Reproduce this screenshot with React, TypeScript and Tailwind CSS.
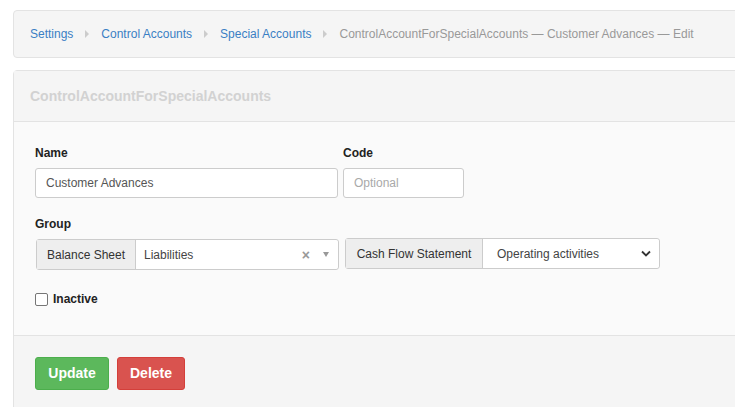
import React from "react";

const Sep = () => (
  <span className="mx-[12px] inline-block h-0 w-0 border-y-[4px] border-l-[4px] border-y-transparent border-l-[#cccccc]" />
);

const App = () => {
  return (
    <div className="min-h-[407px] w-[735px] overflow-hidden bg-white font-['Liberation_Sans',Arial,sans-serif] text-[12px] text-[#333]">
      <div className="pl-[13px] pt-[10px]">
        {/* Breadcrumb */}
        <div className="mr-[-20px] flex h-[48px] items-center rounded-[4px] border border-[#e3e3e3] bg-[#f5f5f5] pl-[16px]">
          <a className="text-[#3a7fc4]">Settings</a>
          <Sep />
          <a className="text-[#3a7fc4]">Control Accounts</a>
          <Sep />
          <a className="text-[#3a7fc4]">Special Accounts</a>
          <Sep />
          <span className="text-[#999]">ControlAccountForSpecialAccounts — Customer Advances — Edit</span>
        </div>

        {/* Panel */}
        <div className="mr-[-20px] mt-[12px] rounded-t-[4px] border border-[#e3e3e3]">
          <div className="flex h-[51px] items-center border-b border-[#e3e3e3] bg-[#f5f5f5] pl-[16px]">
            <span className="text-[14px] font-bold text-[#d2d2d2]">ControlAccountForSpecialAccounts</span>
          </div>

          <div className="h-[214px] border-b border-[#e3e3e3] bg-[#fafafa] pl-[21px] pt-[23px]">
            <div className="flex gap-[5px]">
              <div className="w-[303px]">
                <div className="mb-[6px] text-[12px] font-bold leading-[17px] text-[#222]">Name</div>
                <input
                  className="h-[30px] w-full rounded-[3px] border border-[#cccccc] bg-white px-[10px] text-[12px] text-[#555] outline-none"
                  defaultValue="Customer Advances"
                />
              </div>
              <div className="w-[121px]">
                <div className="mb-[6px] text-[12px] font-bold leading-[17px] text-[#222]">Code</div>
                <input
                  className="h-[30px] w-full rounded-[3px] border border-[#cccccc] bg-white px-[10px] text-[12px] text-[#555] outline-none placeholder:text-[#a9a9a9]"
                  placeholder="Optional"
                />
              </div>
            </div>

            <div className="mt-[18px] mb-[6px] text-[12px] font-bold leading-[17px] text-[#222]">Group</div>
            <div className="flex items-start gap-[6px]">
              <div className="ml-[1px] flex h-[31px] w-[303px] rounded-[3px] border border-[#cccccc]">
                <div className="flex w-[99px] items-center justify-center border-r border-[#cccccc] bg-[#eeeeee] text-[#333]">
                  Balance Sheet
                </div>
                <div className="flex flex-1 items-center rounded-r-[3px] bg-white pl-[8px] pr-[9px] text-[#444]">
                  <span className="flex-1">Liabilities</span>
                  <span className="mr-[13px] text-[14px] font-bold leading-none text-[#999]">×</span>
                  <span className="h-0 w-0 border-x-[3.5px] border-t-[5px] border-x-transparent border-t-[#999]" />
                </div>
              </div>
              <div className="-mt-[1px] flex h-[31px] w-[315px] rounded-[3px] border border-[#cccccc]">
                <div className="flex w-[137px] items-center justify-center border-r border-[#cccccc] bg-[#eeeeee] text-[#333]">
                  Cash Flow Statement
                </div>
                <div className="flex flex-1 items-center rounded-r-[3px] bg-white pl-[14px] pr-[8px] text-[#444]">
                  <span className="flex-1">Operating activities</span>
                  <svg width="10" height="7" viewBox="0 0 10 7">
                    <path d="M1 1.5 L5 5.5 L9 1.5" fill="none" stroke="#333" strokeWidth="1.8" />
                  </svg>
                </div>
              </div>
            </div>

            <label className="mt-[20px] flex items-center gap-[5px]">
              <span className="h-[13px] w-[13px] rounded-[2px] border border-[#767676] bg-white" />
              <span className="font-bold text-[#222]">Inactive</span>
            </label>
          </div>

          <div className="h-[80px] bg-[#f5f5f5] pl-[21px] pt-[21px]">
            <div className="flex gap-[8px]">
              <button className="h-[33px] w-[74px] rounded-[3px] border border-[#4cae4c] bg-[#5cb85c] text-[14px] font-bold text-white">
                Update
              </button>
              <button className="h-[33px] w-[68px] rounded-[3px] border border-[#d43f3a] bg-[#d9534f] text-[14px] font-bold text-white">
                Delete
              </button>
            </div>
          </div>
        </div>
      </div>
    </div>
  );
};

export default App;
